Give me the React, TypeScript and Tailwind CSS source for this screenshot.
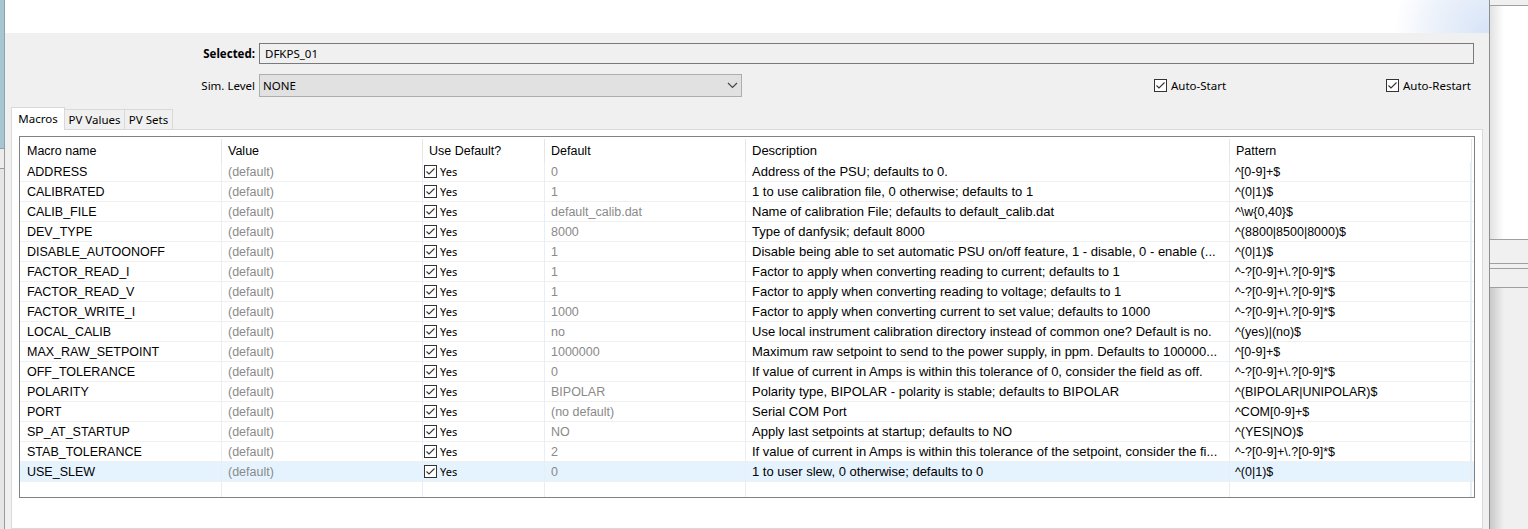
import React from "react";

// Macros table rows: name, default, description, pattern
const rows: [string, string, string, string][] = [
  ["ADDRESS", "0", "Address of the PSU; defaults to 0.", "^[0-9]+$"],
  ["CALIBRATED", "1", "1 to use calibration file, 0 otherwise; defaults to 1", "^(0|1)$"],
  ["CALIB_FILE", "default_calib.dat", "Name of calibration File; defaults to default_calib.dat", "^\\w{0,40}$"],
  ["DEV_TYPE", "8000", "Type of danfysik; default 8000", "^(8800|8500|8000)$"],
  ["DISABLE_AUTOONOFF", "1", "Disable being able to set automatic PSU on/off feature, 1 - disable, 0 - enable (...", "^(0|1)$"],
  ["FACTOR_READ_I", "1", "Factor to apply when converting reading to current; defaults to 1", "^-?[0-9]+\\.?[0-9]*$"],
  ["FACTOR_READ_V", "1", "Factor to apply when converting reading to voltage; defaults to 1", "^-?[0-9]+\\.?[0-9]*$"],
  ["FACTOR_WRITE_I", "1000", "Factor to apply when converting current to set value; defaults to 1000", "^-?[0-9]+\\.?[0-9]*$"],
  ["LOCAL_CALIB", "no", "Use local instrument calibration directory instead of common one? Default is no.", "^(yes)|(no)$"],
  ["MAX_RAW_SETPOINT", "1000000", "Maximum raw setpoint to send to the power supply, in ppm. Defaults to 100000...", "^[0-9]+$"],
  ["OFF_TOLERANCE", "0", "If value of current in Amps is within this tolerance of 0, consider the field as off.", "^-?[0-9]+\\.?[0-9]*$"],
  ["POLARITY", "BIPOLAR", "Polarity type, BIPOLAR - polarity is stable; defaults to BIPOLAR", "^(BIPOLAR|UNIPOLAR)$"],
  ["PORT", "(no default)", "Serial COM Port", "^COM[0-9]+$"],
  ["SP_AT_STARTUP", "NO", "Apply last setpoints at startup; defaults to NO", "^(YES|NO)$"],
  ["STAB_TOLERANCE", "2", "If value of current in Amps is within this tolerance of the setpoint, consider the fi...", "^-?[0-9]+\\.?[0-9]*$"],
  ["USE_SLEW", "0", "1 to user slew, 0 otherwise; defaults to 0", "^(0|1)$"],
];

const cols = "grid grid-cols-[202px_201px_122px_201px_484px_242px_1fr]";

function CheckBox() {
  return (
    <span className="inline-flex h-[13px] w-[13px] shrink-0 items-center justify-center border border-[#333333] bg-white">
      <svg width="11" height="11" viewBox="0 0 11 11">
        <polyline points="1.5,5.5 4,8 9.5,2.5" fill="none" stroke="#333333" strokeWidth="1.1" />
      </svg>
    </span>
  );
}

export default function App() {
  return (
    <div className="flex h-[529px] w-[1528px] overflow-hidden bg-[#f0f0f0] font-['Noto_Sans',sans-serif] text-[11.5px] text-black">
      {/* window behind, left edge */}
      <div className="flex w-[5px] flex-col">
        <div className="h-[148px] border-r border-[#8aa4ae] bg-[#a6c6d2]" />
        <div className="h-[20px] border-t border-r border-[#9a9a9a] bg-[#ececec]" />
        <div className="flex-1 border-t border-r border-[#9a9a9a] bg-[#e6e6e6]" />
      </div>

      {/* dialog */}
      <div className="flex w-[1485px] flex-col border-r border-[#8e8e8e]">
        <div className="h-[33px] bg-white bg-[radial-gradient(circle_at_100%_100%,#d6e3f7_0px,#eef3fb_60px,#ffffff_95px)]" />

        <div className="flex flex-1 flex-col bg-[#f0f0f0] px-[6px] pt-[10px]">
          <div className="flex h-[21px] items-center">
            <div className="w-[248px] pr-[4px] text-right font-bold">Selected:</div>
            <div className="flex h-[21px] w-[1215px] items-center border border-[#7a7a7a] bg-[#f0f0f0] pl-[5px]">
              DFKPS_01
            </div>
          </div>

          <div className="mt-[10px] flex h-[23px] items-center">
            <div className="w-[248px] pr-[4px] text-right">Sim. Level</div>
            <div className="flex h-[23px] w-[483px] items-center justify-between border border-[#adadad] bg-[#e1e1e1] pr-[3px] pl-[3px]">
              <span>NONE</span>
              <svg width="11" height="7" viewBox="0 0 11 7">
                <polyline points="1,1 5.5,5.5 10,1" fill="none" stroke="#444444" strokeWidth="1.2" />
              </svg>
            </div>
            <div className="ml-[412px] flex w-[232px] items-center gap-[4px]">
              <CheckBox />
              <span>Auto-Start</span>
            </div>
            <div className="flex items-center gap-[4px]">
              <CheckBox />
              <span>Auto-Restart</span>
            </div>
          </div>

          {/* tabs */}
          <div className="mt-[10px] flex h-[22px] items-end">
            <div className="relative z-10 mb-[-1px] flex h-[23px] w-[54px] items-center justify-center border border-b-0 border-[#d9d9d9] bg-white">
              Macros
            </div>
            <div className="flex h-[20px] w-[60px] items-center justify-center border-t border-r border-[#d9d9d9] bg-[#f0f0f0]">
              PV Values
            </div>
            <div className="flex h-[20px] w-[48px] items-center justify-center border-t border-r border-[#d9d9d9] bg-[#f0f0f0]">
              PV Sets
            </div>
          </div>

          <div className="flex-1 border border-[#d9d9d9] bg-white px-[7px] pt-[6px]">
            <div className="h-[362px] border border-[#828282] font-['Liberation_Sans',Arial,sans-serif] text-[12.5px]">
              <div className={`${cols} h-[25px] items-center`}>
                {["Macro name", "Value", "Use Default?", "Default", "Description", "Pattern", ""].map((h, i) => (
                  <div
                    key={i}
                    className={`flex h-[23px] items-center self-end border-r border-[#e5e5e5] ${i === 0 ? "pl-[7px]" : "pl-[6px]"} ${i === 4 ? "pt-[1px] text-[13px]" : "pt-[2px]"} ${i === 6 ? "border-r-0" : ""}`}
                  >
                    {h}
                  </div>
                ))}
              </div>

              {rows.map(([name, def, desc, pattern]) => {
                const selected = name === "USE_SLEW";
                return (
                  <div
                    key={name}
                    className={`${cols} h-[20px] border-b border-[#f0f0f0] ${selected ? "bg-[#e5f3ff]" : ""}`}
                  >
                    <div className="flex items-center truncate border-r border-[#e8eef6] pt-[1px] pl-[7px]">{name}</div>
                    <div className="flex items-center border-r border-[#e8eef6] pt-[1px] pl-[6px] text-[#8a8a8a]">(default)</div>
                    <div className="flex items-center gap-[3px] border-r border-[#e8eef6] pl-[1px] font-['Noto_Sans',sans-serif] text-[11px]">
                      <CheckBox />
                      <span>Yes</span>
                    </div>
                    <div className="flex items-center border-r border-[#e8eef6] pt-[1px] pl-[6px] text-[#8a8a8a]">{def}</div>
                    <div className="flex items-center overflow-hidden whitespace-nowrap border-r border-[#e8eef6] pl-[6px] text-[13px]">{desc}</div>
                    <div className="flex items-center border-r-2 border-[#e8eef6] pt-[1px] pl-[5px]">{pattern}</div>
                    <div />
                  </div>
                );
              })}

              <div className={`${cols} h-[15px]`}>
                <div className="border-r border-[#e8eef6]" />
                <div className="border-r border-[#e8eef6]" />
                <div className="border-r border-[#e8eef6]" />
                <div className="border-r border-[#e8eef6]" />
                <div className="border-r border-[#e8eef6]" />
                <div className="border-r-2 border-[#e8eef6]" />
                <div />
              </div>
            </div>
          </div>
        </div>
      </div>

      {/* window behind, right edge */}
      <div className="flex w-[38px] flex-col">
        <div className="h-[6px] border-b border-[#a0a0a0] bg-[#f0f0f0]" />
        <div className="h-[234px] border-b border-[#a0a0a0] bg-[linear-gradient(to_right,#e2e2e2,#ffffff_14px)]" />
        <div className="h-[24px] border-b border-[#a0a0a0] bg-[#f0f0f0]" />
        <div className="h-[5px] border-b border-[#a0a0a0] bg-[#f0f0f0]" />
        <div className="h-[19px] border-b border-[#a0a0a0] bg-[#f0f0f0]" />
        <div className="flex-1 bg-[linear-gradient(to_right,#c8c8c8,#f0f0f0_14px)]" />
      </div>
    </div>
  );
}
